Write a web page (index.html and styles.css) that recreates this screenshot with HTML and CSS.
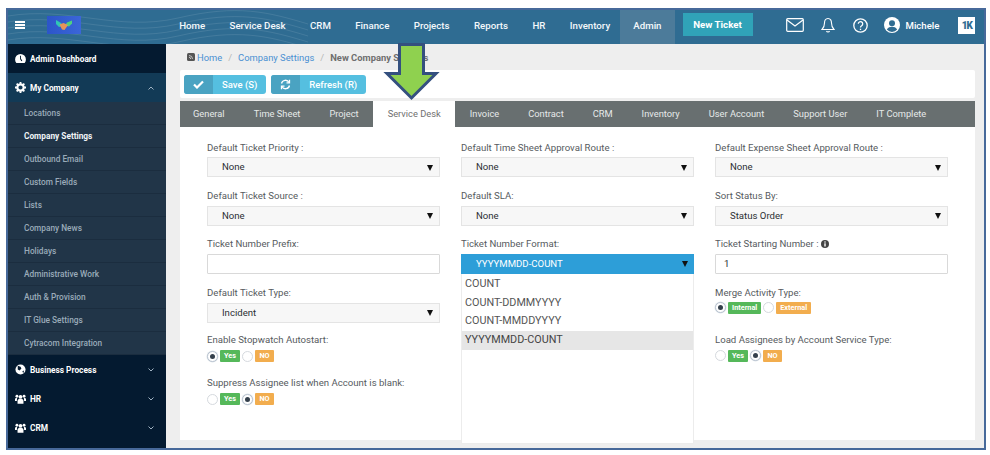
FILE: index.html
```html
<!DOCTYPE html>
<html lang="en">
<head>
<meta charset="utf-8">
<title>Company Settings</title>
<link rel="stylesheet" href="styles.css">
</head>
<body>
<div class="frame">
  <header class="topbar">
    <svg class="waves" width="300" height="34" viewBox="0 0 300 34" fill="none" stroke="#ffffff" stroke-opacity=".1">
      <path d="M0 6C60 -4 110 22 170 8S260 2 300 14"/><path d="M0 12C60 2 110 28 170 14S260 8 300 20"/><path d="M0 18C60 8 110 34 170 20S260 14 300 26"/><path d="M0 24C60 14 110 40 170 26S260 20 300 32"/><path d="M0 30C60 20 110 46 170 32S260 26 300 38"/>
    </svg>
    <div class="brand">
      <svg class="burger" width="10" height="8" viewBox="0 0 10 8" fill="#fff"><rect width="10" height="2"/><rect y="3" width="10" height="2"/><rect y="6" width="10" height="2"/></svg>
      <div class="logo">
        <svg width="18" height="12" viewBox="0 0 18 12"><path d="M1 1l5 3 2 3-4 1-3-3z" fill="#2fc7b5"/><path d="M17 1.500l-5 2-2 3 4 1 3-3z" fill="#4fd07f"/><path d="M4.500 5.500l4-1.500 4.500 2-3.500 5-2.500-.5z" fill="#e8935a"/></svg>
      </div>
    </div>
    <nav class="mainnav">
      <a class="navitem">Home</a><a class="navitem">Service Desk</a><a class="navitem">CRM</a><a class="navitem">Finance</a><a class="navitem">Projects</a><a class="navitem">Reports</a><a class="navitem">HR</a><a class="navitem">Inventory</a><a class="navitem navactive">Admin</a>
    </nav>
    <a class="newticket">New Ticket</a>
    <div class="tools">
      <svg class="mail" width="18" height="14" viewBox="0 0 18 14" fill="none" stroke="#fff" stroke-width="1.2"><rect x=".7" y=".7" width="16.6" height="12.6" rx="1"/><path d="M1 2l8 6 8-6"/></svg>
      <svg class="bell" width="14" height="16" viewBox="0 0 14 16" fill="none" stroke="#fff" stroke-width="1.1"><path d="M7 1.500C4.500 1.500 3.500 3.500 3.500 6c0 3-1 5-2.500 6.500h12C11.500 11 10.500 9 10.500 6c0-2.500-1-4.500-3.500-4.500z"/><path d="M5.500 14a1.600 1.600 0 0 0 3 0"/></svg>
      <svg class="help" width="15" height="15" viewBox="0 0 15 15" fill="none" stroke="#fff" stroke-width="1.3"><circle cx="7.500" cy="7.500" r="6.700"/><path d="M5.300 5.800a2.200 2.200 0 1 1 3.400 1.900c-.8.5-1.200.9-1.200 1.800"/><path d="M7.500 10.700v1.300"/></svg>
      <div class="user">
        <svg width="16" height="16" viewBox="0 0 16 16"><circle cx="8" cy="8" r="8" fill="#fff"/><circle cx="8" cy="6.200" r="3" fill="#2f6c92"/><path d="M2.800 12.600C4 10.400 6 9.800 8 9.800s4 .6 5.200 2.800A7 7 0 0 1 8 15a7 7 0 0 1-5.200-2.400z" fill="#2f6c92"/></svg>
        <span>Michele</span>
      </div>
      <div class="kbadge">1K</div>
    </div>
  </header>

  <div class="body">
    <aside class="sidebar">
      <div class="sideitem"><svg class="sideicon" width="11" height="9" viewBox="0 0 12 10" fill="#fff"><path d="M6 0a6 6 0 0 0-6 6c0 1.500.5 2.800 1.400 4h9.200c.9-1.200 1.400-2.500 1.400-4a6 6 0 0 0-6-6zM5.500 2h1v3l1.500 2.500-1 .5L5.500 5.500z"/></svg><span>Admin Dashboard</span></div>
      <div class="sideitem sideopen"><svg class="sideicon" width="11" height="11" viewBox="0 0 12 12"><circle cx="6" cy="6" r="3.500" fill="none" stroke="#fff" stroke-width="2.400"/><path d="M6 0v2M6 10v2M0 6h2M10 6h2M1.800 1.800l1.400 1.400M8.800 8.800l1.400 1.400M1.800 10.200l1.400-1.400M8.800 3.200l1.400-1.400" stroke="#fff" stroke-width="2"/></svg><span>My Company</span><svg class="chev" width="6" height="4" viewBox="0 0 6 4" fill="none" stroke="#9fb2c2"><path d="M.5 3.500L3 1l2.500 2.500"/></svg></div>
      <ul class="submenu">
        <li>Locations</li>
        <li class="subactive">Company Settings</li>
        <li>Outbound Email</li>
        <li>Custom Fields</li>
        <li>Lists</li>
        <li>Company News</li>
        <li>Holidays</li>
        <li>Administrative Work</li>
        <li>Auth &amp; Provision</li>
        <li>IT Glue Settings</li>
        <li>Cytracom Integration</li>
      </ul>
      <div class="sideitem"><svg class="sideicon" width="11" height="11" viewBox="0 0 12 12"><circle cx="6" cy="6" r="5.500" fill="#fff"/><path d="M3 2l3 1 1 2-2 2-2-1zM8 8l2-1-1 3z" fill="#041a30"/></svg><span>Business Process</span><svg class="chev" width="6" height="4" viewBox="0 0 6 4" fill="none" stroke="#9fb2c2"><path d="M.5 .5L3 3l2.500-2.500"/></svg></div>
      <div class="sideitem"><svg class="sideicon" width="11" height="10" viewBox="0 0 13 11" fill="#fff"><circle cx="6.500" cy="3" r="2.200"/><circle cx="2.300" cy="2.200" r="1.700"/><circle cx="10.700" cy="2.200" r="1.700"/><path d="M3 11V7.500C3 6 4.500 5.500 6.500 5.500S10 6 10 7.500V11zM0 8V5.500C0 4.700 1 4.300 2.500 4.300L2.200 8zM13 8V5.500c0-.8-1-1.200-2.500-1.200l.3 3.700z"/></svg><span>HR</span><svg class="chev" width="6" height="4" viewBox="0 0 6 4" fill="none" stroke="#9fb2c2"><path d="M.5 .5L3 3l2.500-2.500"/></svg></div>
      <div class="sideitem"><svg class="sideicon" width="11" height="10" viewBox="0 0 13 11" fill="#fff"><circle cx="6.500" cy="3" r="2.200"/><circle cx="2.300" cy="2.200" r="1.700"/><circle cx="10.700" cy="2.200" r="1.700"/><path d="M3 11V7.500C3 6 4.500 5.500 6.500 5.500S10 6 10 7.500V11zM0 8V5.500C0 4.700 1 4.300 2.500 4.300L2.200 8zM13 8V5.500c0-.8-1-1.200-2.500-1.200l.3 3.700z"/></svg><span>CRM</span><svg class="chev" width="6" height="4" viewBox="0 0 6 4" fill="none" stroke="#9fb2c2"><path d="M.5 .5L3 3l2.500-2.500"/></svg></div>
    </aside>

    <main class="content">
      <div class="crumbs">
        <svg class="rss" width="8" height="8" viewBox="0 0 8 8"><rect width="8" height="8" rx="1.500" fill="#555"/><path d="M2 2.500a3.500 3.500 0 0 1 3.500 3.500M2 4.300A1.700 1.700 0 0 1 3.700 6" fill="none" stroke="#ddd" stroke-width=".8"/></svg>
        <a class="crumb">Home</a><span class="sep">/</span><a class="crumb">Company Settings</a><span class="sep">/</span><b class="crumbcur">New Company Settings</b>
      </div>
      <div class="toolbar">
        <button class="btn"><span class="btnicon"><svg width="11" height="9" viewBox="0 0 11 9" fill="none" stroke="#fff" stroke-width="2.200"><path d="M1 4.500l3 3 6-6"/></svg></span><span class="btnlabel">Save (S)</span></button>
        <button class="btn"><span class="btnicon"><svg width="11" height="11" viewBox="0 0 11 11" fill="none" stroke="#fff" stroke-width="1.300"><path d="M1.500 4.500A4 4 0 0 1 9 3.500M9.500 6.500A4 4 0 0 1 2 7.500"/><path d="M9.500 .8v3H6.500M1.500 10.200v-3h3"/></svg></span><span class="btnlabel">Refresh (R)</span></button>
      </div>
      <div class="tabs">
        <a class="tab">General</a><a class="tab">Time Sheet</a><a class="tab">Project</a><a class="tab tabactive">Service Desk</a><a class="tab">Invoice</a><a class="tab">Contract</a><a class="tab">CRM</a><a class="tab">Inventory</a><a class="tab">User Account</a><a class="tab">Support User</a><a class="tab">IT Complete</a>
      </div>
      <div class="panel">
        <div class="formcol">
          <div class="field"><label>Default Ticket Priority :</label><div class="select">None</div></div>
          <div class="field"><label>Default Ticket Source :</label><div class="select">None</div></div>
          <div class="field"><label>Ticket Number Prefix:</label><div class="input"></div></div>
          <div class="field"><label>Default Ticket Type:</label><div class="select">Incident</div></div>
          <div class="field fieldradio"><label>Enable Stopwatch Autostart:</label><div class="radios"><i class="radio on"></i><b class="tag yes">Yes</b><i class="radio"></i><b class="tag no">NO</b></div></div>
          <div class="field fieldradio"><label>Suppress Assignee list when Account is blank:</label><div class="radios"><i class="radio"></i><b class="tag yes">Yes</b><i class="radio on"></i><b class="tag no">NO</b></div></div>
        </div>
        <div class="formcol">
          <div class="field"><label>Default Time Sheet Approval Route :</label><div class="select">None</div></div>
          <div class="field"><label>Default SLA:</label><div class="select">None</div></div>
          <div class="field ddwrap"><label>Ticket Number Format:</label><div class="select selectopen">YYYYMMDD-COUNT</div>
            <ul class="dropdown"><li>COUNT</li><li>COUNT-DDMMYYYY</li><li>COUNT-MMDDYYYY</li><li class="ddsel">YYYYMMDD-COUNT</li></ul>
          </div>
        </div>
        <div class="formcol">
          <div class="field"><label>Default Expense Sheet Approval Route :</label><div class="select">None</div></div>
          <div class="field"><label>Sort Status By:</label><div class="select">Status Order</div></div>
          <div class="field"><label>Ticket Starting Number : <svg class="info" width="8" height="8" viewBox="0 0 8 8"><circle cx="4" cy="4" r="4" fill="#444"/><rect x="3.300" y="3.300" width="1.400" height="3.200" fill="#fff"/><rect x="3.300" y="1.400" width="1.400" height="1.200" fill="#fff"/></svg></label><div class="input">1</div></div>
          <div class="field fieldmerge"><label>Merge Activity Type:</label><div class="radios"><i class="radio on"></i><b class="tag yes">Internal</b><i class="radio"></i><b class="tag no">External</b></div></div>
          <div class="field fieldradio"><label>Load Assignees by Account Service Type:</label><div class="radios"><i class="radio"></i><b class="tag yes">Yes</b><i class="radio on"></i><b class="tag no">NO</b></div></div>
        </div>
      </div>
    </main>
  </div>
  <svg class="arrow" width="60" height="60" viewBox="0 0 60 60"><path d="M16.500 1.500H40.500V30.500H53L28.500 55 4 30.500H16.500z" fill="#8fd14f" stroke="#34507f" stroke-width="3"/></svg>
</div>
</body>
</html>
```

FILE: styles.css
```css
* { box-sizing: border-box; }
html, body { margin: 0; padding: 0; background: #fff; }
body { font-family: Roboto, "Liberation Sans", sans-serif; overflow: hidden; }
a, span, label, li { white-space: nowrap; }
.frame { position: relative; width: 980px; height: 442px; margin: 8px 0 0 6px; border: 2px solid #47699a; display: flex; flex-direction: column; overflow: hidden; }
.topbar { position: relative; height: 34px; flex: none; background: #2f6c92; display: flex; align-items: stretch; color: #fff; }
.waves { position: absolute; left: 0; top: 0; }
.brand { position: relative; width: 159px; flex: none; display: flex; align-items: center; padding: 0 0 4px 7px; }
.burger { flex: none; }
.logo { width: 34px; height: 18px; margin-left: 22px; background: linear-gradient(90deg, #2c55c9, #3b66d8); display: flex; align-items: center; justify-content: center; }
.mainnav { position: relative; display: flex; font-size: 9.700px; font-weight: 500; }
.navitem { display: flex; align-items: center; padding: 0 12.200px 4px; color: #f4f8fb; white-space: nowrap; }
.navactive { background: #4c7b9a; padding: 0 13px 4px; margin-left: -2px; }
.newticket { position: relative; align-self: flex-start; margin: 3px 0 0 8px; width: 70px; height: 23px; display: flex; align-items: center; justify-content: center; background: #30a3b8; font-size: 9.700px; font-weight: 700; }
.tools { position: relative; display: flex; align-items: center; margin-left: 33px; padding-bottom: 4px; }
.mail { margin-right: 17px; }
.bell { margin-right: 18px; }
.help { margin-right: 16px; }
.user { display: flex; align-items: center; gap: 6px; font-size: 9.600px; font-weight: 500; }
.kbadge { margin-left: 19px; width: 17px; height: 17px; background: #fff; color: #2f6c92; font-size: 10px; font-weight: 900; display: flex; align-items: center; justify-content: center; letter-spacing: -1px; }

.body { flex: 1; display: flex; min-height: 0; }
.sidebar { width: 158px; flex: none; background: #041a30; color: #fff; }
.sideitem { height: 29px; display: flex; align-items: center; padding-left: 7px; font-size: 8.300px; font-weight: 700; position: relative; }
.sideopen { background: #123a56; }
.sideicon { flex: none; margin-right: 4px; }
.chev { position: absolute; left: 140px; top: 13px; }
.submenu { list-style: none; margin: 0; padding: 0; background: #213548; }
.submenu li { height: 23px; padding-left: 16px; display: flex; align-items: center; font-size: 8.300px; font-weight: 500; color: #9aabb9; border-bottom: 1px solid #1b2d3f; }
.submenu .subactive { color: #f0f4f7; font-weight: 700; }
.content { flex: 1; min-width: 0; background: #eee; padding: 0 9px 8px 14px; display: flex; flex-direction: column; }
.crumbs { height: 26px; flex: none; display: flex; align-items: center; padding-left: 7px; font-size: 9.400px; }
.rss { margin-right: 2px; }
.crumb { color: #4a90d2; }
.sep { color: #b5b5b5; margin: 0 6px; }
.crumbcur { color: #6f6f6f; font-size: 9.400px; font-weight: 700; white-space: nowrap; }
.toolbar { height: 28px; flex: none; background: #fff; display: flex; align-items: center; gap: 5px; padding: 0 4px; border-radius: 2px; }
.btn { height: 19px; padding: 0; border: 0; display: flex; border-radius: 3px; overflow: hidden; background: #55bfe0; color: #fff; font: 500 9.500px Roboto, "Liberation Sans", sans-serif; }
.btnicon { width: 29px; height: 100%; background: #4aa3c2; display: flex; align-items: center; justify-content: center; }
.btnlabel { display: flex; align-items: center; height: 100%; padding: 0 9px; }
.tabs { height: 26px; flex: none; margin-top: 3px; background: #686f70; display: flex; font-size: 9.300px; color: #e6e9e9; padding-left: 0; }
.tab { display: flex; align-items: center; padding: 0 14.500px 1px; white-space: nowrap; }
.tab:first-child { padding-left: 13px; }
.tabactive { background: #fff; color: #6f6f6f; }
.panel { flex: 1; min-height: 0; background: #fff; padding: 14px 0 0 27px; display: grid; grid-template-columns: repeat(3, 233px); column-gap: 21px; align-content: start; }
.formcol { display: flex; flex-direction: column; min-width: 0; }
.field { height: 48.500px; flex: none; }
.field label { display: block; height: 16px; line-height: 12px; font-size: 9.600px; color: #565b5e; white-space: nowrap; }
.field:first-child label { line-height: 13px; }
.select { position: relative; height: 20px; background: #f7f7f7; border: 1px solid #e4e4e4; padding-left: 14px; font-size: 9.600px; line-height: 18px; color: #2c2f33; }
.select::after { content: ""; position: absolute; right: 6px; top: 6.500px; border-left: 3.500px solid transparent; border-right: 3.500px solid transparent; border-top: 6px solid #111; }
.input { height: 20px; border: 1px solid #d9d9d9; border-radius: 1px; padding-left: 8px; font-size: 9.600px; line-height: 18px; color: #2c2f33; background: #fff; }
.fieldradio { height: 43px; }
.fieldradio label { line-height: 10px; }
.fieldmerge { height: 48px; }
.radios { display: flex; align-items: center; gap: 2px; margin-top: -1px; }
.radio { width: 11px; height: 11px; border-radius: 50%; border: 1px solid #d5d9de; background: #fff; display: block; position: relative; flex: none; }
.radio.on { border-color: #b8c2cf; box-shadow: 0 0 0 .5px #dfe5ea; }
.radio.on::after { content: ""; position: absolute; left: 2px; top: 2px; width: 5px; height: 5px; border-radius: 50%; background: #34404c; }
.tag { height: 12px; padding: 0 4px; border-radius: 1px; font-size: 7.300px; line-height: 12px; color: #fff; font-weight: 700; }
.yes { background: #55b85a; min-width: 20px; text-align: center; }
.no { background: #f2ad4e; min-width: 19px; text-align: center; }
.ddwrap { position: relative; z-index: 2; }
.selectopen { background: #2d9ed8; border: 0; color: #fff; line-height: 20px; padding-left: 15px; }
.dropdown { list-style: none; margin: 0; padding: 1px 0 0; position: absolute; left: 0; top: 36px; width: 233px; height: 170px; background: #fff; border: 1px solid #ececec; border-top: 0; font-size: 10.800px; color: #555; }
.dropdown li { height: 18.700px; line-height: 18.700px; padding-left: 3px; }
.dropdown .ddsel { background: #e6e6e6; color: #444; }
.info { vertical-align: -1px; }
.arrow { position: absolute; left: 375px; top: 33px; z-index: 5; }
```
